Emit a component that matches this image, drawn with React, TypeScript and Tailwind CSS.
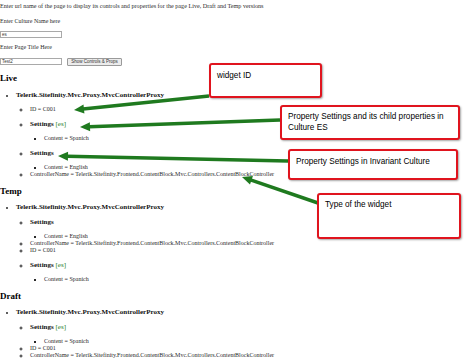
const serif = { fontFamily: '"Liberation Serif", "Times New Roman", serif' };

type Arrow = { x1: number; y1: number; x2: number; y2: number };

const ARROWS: Arrow[] = [
    { x1: 209, y1: 96, x2: 74, y2: 110 },
    { x1: 280, y1: 120, x2: 80, y2: 127 },
    { x1: 288, y1: 161, x2: 58, y2: 156 },
    { x1: 318, y1: 203, x2: 242, y2: 177 },
];

const Callout = ({ className, children }: { className: string; children: React.ReactNode }) => (
    <div
        className={`absolute rounded-[3px] border-2 border-[#e0141e] bg-white text-[8.2px] leading-[11px] text-black shadow-[1px_1px_2px_rgba(0,0,0,0.35)] ${className}`}
        style={{ fontFamily: '"Liberation Sans", Arial, sans-serif' }}
    >
        {children}
    </div>
);

const ArrowShape = ({ x1, y1, x2, y2 }: Arrow) => {
    const dx = x2 - x1;
    const dy = y2 - y1;
    const len = Math.hypot(dx, dy);
    const ux = dx / len;
    const uy = dy / len;
    const headLen = 10;
    const headW = 4.5;
    const bx = x2 - ux * headLen;
    const by = y2 - uy * headLen;
    const pts = `${x2},${y2} ${bx - uy * headW},${by + ux * headW} ${bx + uy * headW},${by - ux * headW}`;
    return (
        <g>
            <line x1={x1} y1={y1} x2={bx + ux} y2={by + uy} stroke="#1f7a1f" strokeWidth={3.5} />
            <polygon points={pts} fill="#1f7a1f" />
        </g>
    );
};

const Es = () => <span className="font-normal text-[#1a7a1a]">[es]</span>;

const Head = ({ children }: { children: React.ReactNode }) => (
    <div className="my-[7.5px] text-[7px] font-bold text-[#111]">{children}</div>
);

const Content = ({ value }: { value: string }) => (
    <ul className="list-[square] pl-[14px]">
        <li>Content = {value}</li>
    </ul>
);

const CONTROLLER = 'ControllerName = Telerik.Sitefinity.Frontend.ContentBlock.Mvc.Controllers.ContentBlockController';
const PROXY = 'Telerik.Sitefinity.Mvc.Proxy.MvcControllerProxy';

const Section = ({ title, children }: { title: string; children: React.ReactNode }) => (
    <>
        <h2 className="mt-[7.5px] mb-[8.5px] text-[9px] leading-[10px] font-bold text-black">{title}</h2>
        <ul className="list-disc pl-[16px]">
            <li>
                <Head>{PROXY}</Head>
                <ul className="list-[circle] pl-[14px]">{children}</ul>
            </li>
        </ul>
    </>
);

export default function App() {
    return (
        <div
            className="relative h-[360px] w-[474px] overflow-hidden bg-white pt-[3px] text-[6px] leading-[7px] text-[#2a2a2a]"
            style={serif}
        >
            <p className="text-[6.15px]">
                Enter url name of the page to display its controls and properties for the page Live, Draft and Temp versions
            </p>
            <p className="mt-[7.5px]">Enter Culture Name here</p>
            <div className="mt-[6px] flex h-[7px] w-[62px] items-center border border-[#a9a9a9] px-[1px] text-[4.5px] text-[#333]" style={{ fontFamily: '"Liberation Sans", Arial, sans-serif' }}>
                es
            </div>
            <p className="mt-[6.5px]">Enter Page Title Here</p>
            <div className="mt-[6.5px] flex items-center gap-[5px]" style={{ fontFamily: '"Liberation Sans", Arial, sans-serif' }}>
                <div className="flex h-[7px] w-[62px] items-center border border-[#a9a9a9] px-[1px] text-[4.5px] text-[#333]">Test2</div>
                <div className="flex h-[8px] w-[55px] items-center justify-center rounded-[1px] border border-[#9a9a9a] bg-[#ececec] text-[4.5px] text-[#333]">
                    Show Controls &amp; Props
                </div>
            </div>

            <Section title="Live">
                <li>ID = C001</li>
                <li>
                    <Head>
                        Settings <Es />
                    </Head>
                    <Content value="Spanich" />
                </li>
                <li>
                    <Head>Settings</Head>
                    <Content value="English" />
                </li>
                <li>{CONTROLLER}</li>
            </Section>

            <Section title="Temp">
                <li>
                    <Head>Settings</Head>
                    <Content value="English" />
                </li>
                <li>{CONTROLLER}</li>
                <li>ID = C001</li>
                <li>
                    <Head>
                        Settings <Es />
                    </Head>
                    <Content value="Spanich" />
                </li>
            </Section>

            <Section title="Draft">
                <li>
                    <Head>
                        Settings <Es />
                    </Head>
                    <Content value="Spanich" />
                </li>
                <li>ID = C001</li>
                <li>{CONTROLLER}</li>
            </Section>

            <svg className="pointer-events-none absolute left-0 top-0" width={474} height={360}>
                {ARROWS.map((a, i) => (
                    <ArrowShape key={i} {...a} />
                ))}
            </svg>

            <Callout className="left-[209px] top-[63px] h-[35px] w-[113px] px-[6px] pt-[5px]">widget ID</Callout>
            <Callout className="left-[280px] top-[105px] h-[35px] w-[180px] px-[6px] pt-[4px]">
                Property Settings and its child properties in
                <br />
                Culture ES
            </Callout>
            <Callout className="left-[288px] top-[149px] h-[31px] w-[170px] px-[6px] pt-[5px]">
                Property Settings in Invariant Culture
            </Callout>
            <Callout className="left-[317px] top-[193px] h-[46px] w-[144px] px-[6px] pt-[4px]">Type of the widget</Callout>
        </div>
    );
}
